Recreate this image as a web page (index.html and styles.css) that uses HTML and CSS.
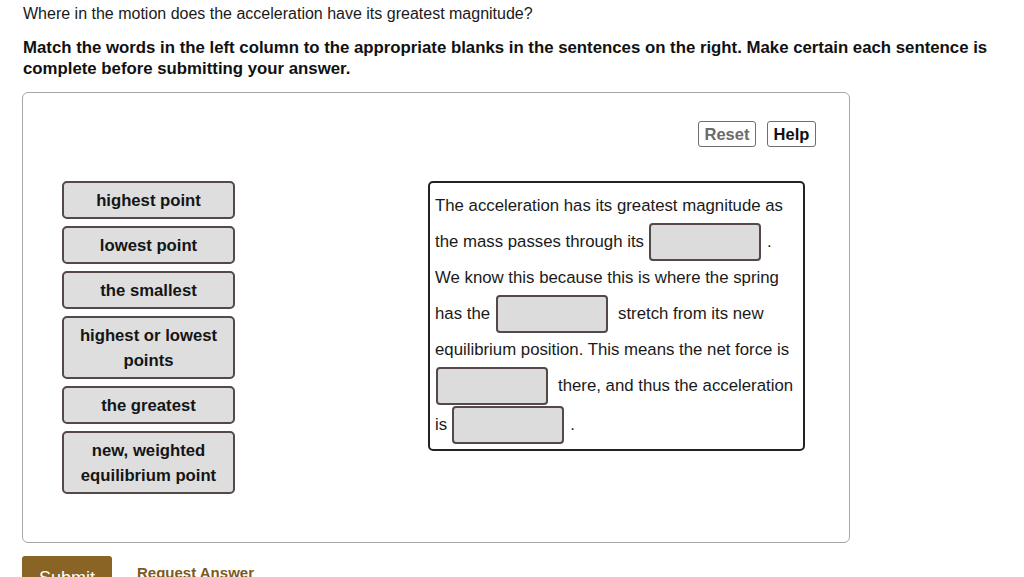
FILE: index.html
```html
<!DOCTYPE html>
<html lang="en">
<head>
    <meta charset="UTF-8">
    <title>Match the words</title>
    <link rel="stylesheet" href="styles.css">
</head>
<body>
    <p class="question">Where in the motion does the acceleration have its greatest magnitude?</p>
    <p class="instructions">Match the words in the left column to the appropriate blanks in the sentences on the right. Make certain each sentence is complete before submitting your answer.</p>

    <div class="panel">
        <div class="toolbar">
            <button class="tool-btn reset">Reset</button>
            <button class="tool-btn help">Help</button>
        </div>
        <div class="workspace">
            <div class="word-bank">
                <div class="tile">highest point</div>
                <div class="tile">lowest point</div>
                <div class="tile">the smallest</div>
                <div class="tile">highest or lowest points</div>
                <div class="tile">the greatest</div>
                <div class="tile">new, weighted equilibrium point</div>
            </div>
            <div class="sentence-box">
                <div class="line">The acceleration has its greatest magnitude as</div>
                <div class="line">the mass passes through its<span class="blank b1"></span>.</div>
                <div class="line">We know this because this is where the spring</div>
                <div class="line">has the<span class="blank b2"></span>stretch from its new</div>
                <div class="line">equilibrium position. This means the net force is</div>
                <div class="line"><span class="blank b3"></span>there, and thus the acceleration</div>
                <div class="line last">is<span class="blank b4"></span>.</div>
            </div>
        </div>
    </div>

    <div class="actions">
        <button class="submit">Submit</button>
        <a class="request" href="#">Request Answer</a>
    </div>
</body>
</html>
```

FILE: styles.css
```css
body {
    margin: 0;
    padding: 0 22px 0 23px;
    font-family: "Liberation Sans", Arial, sans-serif;
    font-size: 16px;
    color: #1a1a1a;
    background: #fff;
}

.question {
    margin: 4px 0 0;
    line-height: 20px;
}

.instructions {
    margin: 13px 0 0;
    font-size: 16.8px;
    font-weight: bold;
    line-height: 21px;
    color: #111;
}

.panel {
    margin: 13px 0 0 -1px;
    width: 828px;
    height: 451px;
    box-sizing: border-box;
    border: 1px solid #a6a6a6;
    border-radius: 6px;
    padding: 28px 33px 0 39px;
}

.toolbar {
    display: flex;
    justify-content: flex-end;
    gap: 11px;
}

.tool-btn {
    height: 26px;
    padding: 0 5px;
    background: #fff;
    border: 1px solid #6e6e6e;
    border-radius: 3px;
    font-family: "Liberation Sans", Arial, sans-serif;
    font-size: 16.5px;
    font-weight: bold;
    line-height: 24px;
}

.reset {
    color: #6b6b6b;
    width: 58px;
}

.help {
    color: #111;
    width: 49px;
}

.workspace {
    display: flex;
    align-items: flex-start;
    margin-top: 34px;
}

.word-bank {
    width: 173px;
    display: flex;
    flex-direction: column;
    gap: 7px;
}

.tile {
    box-sizing: border-box;
    background: #dedede;
    border: 2px solid #544848;
    border-radius: 5px;
    padding: 5px 8px 4px;
    font-size: 16.7px;
    line-height: 25px;
    text-align: center;
    font-weight: bold;
    color: #151515;
}

.sentence-box {
    margin-left: 193px;
    width: 377px;
    height: 270px;
    box-sizing: border-box;
    border: 2px solid #222;
    border-radius: 5px;
    padding: 5px 5px 3px;
    font-size: 16.8px;
}

.line {
    display: flex;
    align-items: center;
    height: 36px;
    white-space: nowrap;
    color: #1a1a1a;
}

.line.last {
    height: 42px;
}

.blank {
    display: inline-block;
    box-sizing: border-box;
    width: 112px;
    height: 38px;
    background: #dcdcdc;
    border: 2px solid #544848;
    border-radius: 4px;
}

.b1 {
    margin: 0 6px 0 5px;
}

.b2 {
    margin: 0 10px 0 6px;
}

.b3 {
    margin: 0 10px 0 1px;
}

.b4 {
    margin: 0 6px 0 5px;
}

.actions {
    display: flex;
    align-items: flex-start;
    gap: 25px;
    margin-top: 13px;
    margin-left: -1px;
}

.submit {
    width: 90px;
    height: 34px;
    background: #8a6424;
    border: none;
    border-radius: 3px 3px 0 0;
    color: #fff;
    font-family: "Liberation Sans", Arial, sans-serif;
    font-size: 18px;
    padding-top: 11px;
}

.request {
    color: #7d5a1c;
    font-size: 15px;
    font-weight: bold;
    text-decoration: none;
    line-height: 20px;
    padding-top: 7px;
}
```
